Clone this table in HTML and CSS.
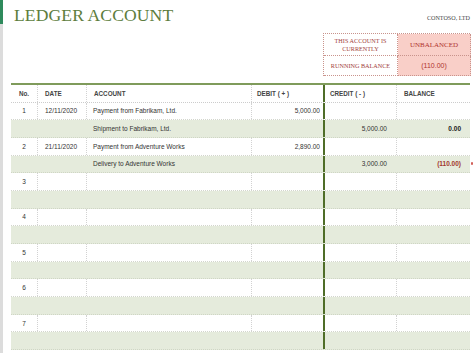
FILE: index.html
```html
<!DOCTYPE html>
<html lang="en">
<head>
<meta charset="utf-8">
<title>Ledger Account</title>
<link rel="stylesheet" href="styles.css">
</head>
<body>
<div class="page">
  <header class="top">
    <h1 class="title">LEDGER ACCOUNT</h1>
    <div class="side">
      <div class="company">CONTOSO, LTD</div>
      <div class="status">
        <div class="st-label">THIS ACCOUNT IS<br>CURRENTLY</div>
        <div class="st-value st-big">UNBALANCED</div>
        <div class="st-label">RUNNING BALANCE</div>
        <div class="st-value st-num">(110.00)</div>
      </div>
    </div>
  </header>

  <div class="ledger">
    <div class="row head">
      <div class="c no">No.</div>
      <div class="c date">DATE</div>
      <div class="c acct">ACCOUNT</div>
      <div class="c debit">DEBIT ( + )</div>
      <div class="c credit">CREDIT ( - )</div>
      <div class="c bal">BALANCE</div>
    </div>

    <div class="row">
      <div class="c no">1</div>
      <div class="c date">12/11/2020</div>
      <div class="c acct">Payment from Fabrikam, Ltd.</div>
      <div class="c debit">5,000.00</div>
      <div class="c credit"></div>
      <div class="c bal"></div>
    </div>
    <div class="row alt">
      <div class="c no"></div>
      <div class="c date"></div>
      <div class="c acct">Shipment to Fabrikam, Ltd.</div>
      <div class="c debit"></div>
      <div class="c credit">5,000.00</div>
      <div class="c bal strong">0.00</div>
    </div>

    <div class="row">
      <div class="c no">2</div>
      <div class="c date">21/11/2020</div>
      <div class="c acct">Payment from Adventure Works</div>
      <div class="c debit">2,890.00</div>
      <div class="c credit"></div>
      <div class="c bal"></div>
    </div>
    <div class="row alt">
      <div class="c no"></div>
      <div class="c date"></div>
      <div class="c acct">Delivery to Adventure Works</div>
      <div class="c debit"></div>
      <div class="c credit">3,000.00</div>
      <div class="c bal strong neg">(110.00)</div>
      <span class="flag"></span>
    </div>

    <div class="row">
      <div class="c no">3</div><div class="c date"></div><div class="c acct"></div>
      <div class="c debit"></div><div class="c credit"></div><div class="c bal"></div>
    </div>
    <div class="row alt">
      <div class="c no"></div><div class="c date"></div><div class="c acct"></div>
      <div class="c debit"></div><div class="c credit"></div><div class="c bal"></div>
    </div>

    <div class="row">
      <div class="c no">4</div><div class="c date"></div><div class="c acct"></div>
      <div class="c debit"></div><div class="c credit"></div><div class="c bal"></div>
    </div>
    <div class="row alt">
      <div class="c no"></div><div class="c date"></div><div class="c acct"></div>
      <div class="c debit"></div><div class="c credit"></div><div class="c bal"></div>
    </div>

    <div class="row">
      <div class="c no">5</div><div class="c date"></div><div class="c acct"></div>
      <div class="c debit"></div><div class="c credit"></div><div class="c bal"></div>
    </div>
    <div class="row alt">
      <div class="c no"></div><div class="c date"></div><div class="c acct"></div>
      <div class="c debit"></div><div class="c credit"></div><div class="c bal"></div>
    </div>

    <div class="row">
      <div class="c no">6</div><div class="c date"></div><div class="c acct"></div>
      <div class="c debit"></div><div class="c credit"></div><div class="c bal"></div>
    </div>
    <div class="row alt">
      <div class="c no"></div><div class="c date"></div><div class="c acct"></div>
      <div class="c debit"></div><div class="c credit"></div><div class="c bal"></div>
    </div>

    <div class="row">
      <div class="c no">7</div><div class="c date"></div><div class="c acct"></div>
      <div class="c debit"></div><div class="c credit"></div><div class="c bal"></div>
    </div>
    <div class="row alt">
      <div class="c no"></div><div class="c date"></div><div class="c acct"></div>
      <div class="c debit"></div><div class="c credit"></div><div class="c bal"></div>
    </div>
  </div>
</div>
</body>
</html>
```

FILE: styles.css
```css
html {
  overflow: hidden;
}

body {
  margin: 0;
  background:
    linear-gradient(#2f8a5c, #2f8a5c) 0 0 / 3px 24px no-repeat,
    linear-gradient(#dcdcdc, #dcdcdc) 0 0 / 3px 100% no-repeat,
    #ffffff;
  font-family: "Liberation Sans", Arial, sans-serif;
  color: #333;
  min-height: 353px;
}

.page {
  padding: 0 4px 0 11px;
}

/* ---------- top area ---------- */
.top {
  display: flex;
  justify-content: space-between;
  height: 83px;
}

.title {
  margin: 0;
  padding: 5px 0 0 3px;
  font-family: "Liberation Serif", "Times New Roman", serif;
  font-weight: normal;
  font-size: 17.6px;
  line-height: 20px;
  color: #5d7d3d;
  letter-spacing: 0.1px;
}

.side {
  width: 147px;
  display: flex;
  flex-direction: column;
}

.company {
  margin-top: 14px;
  font-family: "Liberation Serif", "Times New Roman", serif;
  font-size: 6.1px;
  line-height: 8px;
  text-align: right;
  color: #444;
}

.status {
  margin-top: 11px;
  display: grid;
  grid-template-columns: 74px 73px;
  grid-template-rows: 22px 20px;
  border-top: 1px dotted #c9938c;
  border-left: 1px dotted #c9938c;
}

.status > div {
  box-sizing: border-box;
  border-right: 1px dotted #c9938c;
  border-bottom: 1px dotted #c9938c;
  display: flex;
  align-items: center;
  justify-content: center;
  text-align: center;
}

.st-label {
  font-family: "Liberation Serif", "Times New Roman", serif;
  font-size: 6.2px;
  line-height: 7.5px;
  color: #a2413b;
  background: #ffffff;
}

.st-value {
  background: #f9cfc8;
  color: #b0342e;
}

.st-big {
  font-family: "Liberation Serif", "Times New Roman", serif;
  font-size: 7px;
}

.st-num {
  font-family: "Liberation Sans", Arial, sans-serif;
  font-size: 7px;
}

/* ---------- ledger grid ---------- */
.ledger {
  width: 459px;
}

.row {
  position: relative;
  display: grid;
  grid-template-columns: 27px 49px 165px 71px 74px 73px;
  height: 17.7px;
  box-sizing: border-box;
  border-bottom: 1px dotted #d3d6cd;
  font-size: 6.5px;
}

.row.head {
  height: 19.5px;
  border-top: 2px solid #7f9b5b;
  border-bottom: 1px dotted #cccccc;
  font-weight: bold;
  font-size: 6.3px;
  color: #444;
}

.row.alt {
  background: #e5ebdc;
  border-bottom-color: #cfd6c5;
}

.c {
  box-sizing: border-box;
  display: flex;
  align-items: center;
  white-space: nowrap;
  min-width: 0;
}

.no {
  justify-content: center;
}

.date {
  padding-left: 7px;
}

.acct {
  padding-left: 6px;
}

.head .acct {
  padding-left: 7px;
}

.debit {
  justify-content: flex-end;
  padding-right: 3px;
}

.head .debit {
  justify-content: flex-start;
  padding-left: 5px;
}

.credit {
  border-left: 2px solid #4f6d28;
  justify-content: flex-end;
  padding-right: 10px;
}

.head .credit {
  justify-content: flex-start;
  padding-left: 5px;
}

.bal {
  justify-content: flex-end;
  padding-right: 9px;
}

.head .bal {
  justify-content: flex-start;
  padding-left: 7px;
}

/* dotted column dividers on white rows and header */
.row:not(.alt) .no,
.row:not(.alt) .date,
.row:not(.alt) .acct,
.row:not(.alt) .credit {
  border-right: 1px dotted #d2d2d2;
}

.strong {
  font-weight: bold;
  color: #222;
}

.neg {
  color: #a2382c;
}

.flag {
  position: absolute;
  right: -3px;
  top: 6px;
  width: 2px;
  height: 3px;
  border-radius: 1px;
  background: #d2605a;
}
```
